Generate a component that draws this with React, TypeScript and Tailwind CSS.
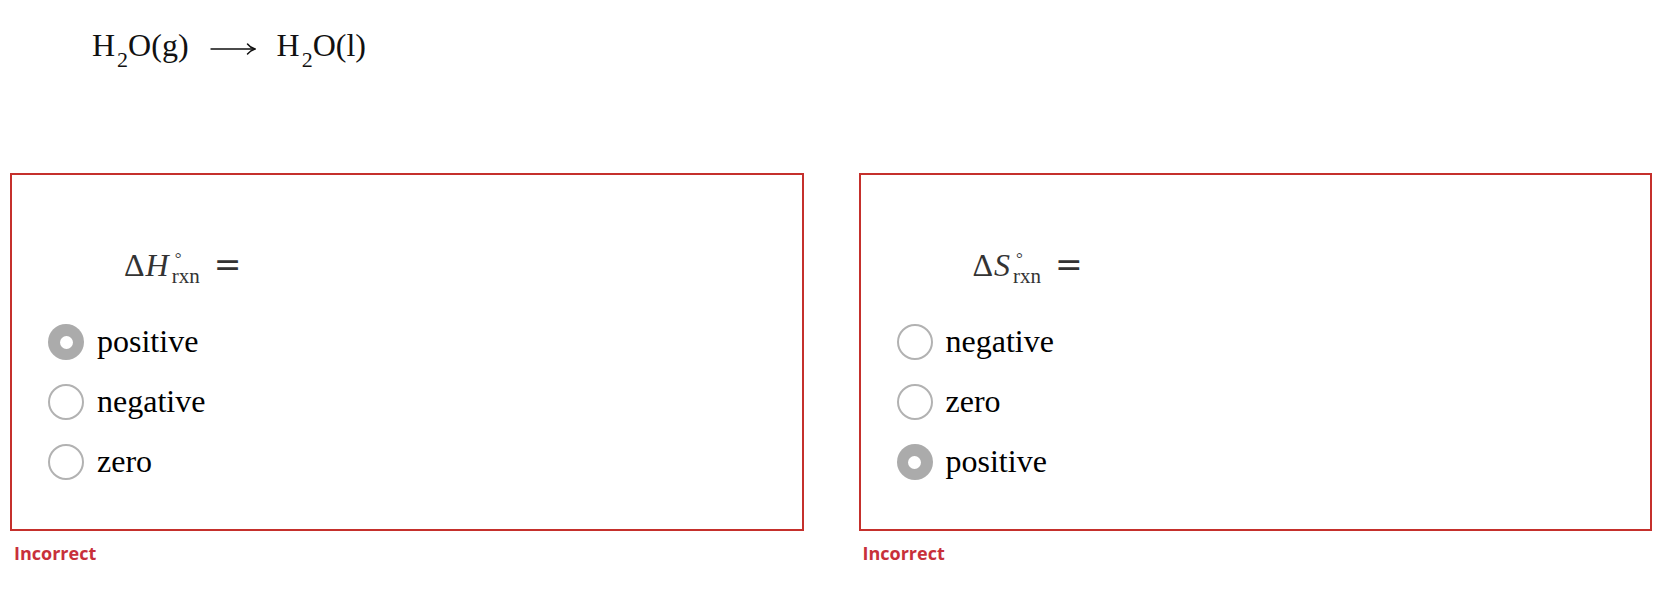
import React from "react";

type Choice = { label: string; checked?: boolean };

type Question = {
  symbol: string;
  choices: Choice[];
};

const questions: Question[] = [
  {
    symbol: "H",
    choices: [
      { label: "positive", checked: true },
      { label: "negative" },
      { label: "zero" },
    ],
  },
  {
    symbol: "S",
    choices: [
      { label: "negative" },
      { label: "zero" },
      { label: "positive", checked: true },
    ],
  },
];

const serif = "font-['Liberation_Serif','Times_New_Roman',serif]";

const Radio = ({ checked }: { checked?: boolean }) =>
  checked ? (
    <span className="flex h-[36px] w-[36px] shrink-0 items-center justify-center rounded-full bg-[#ababab]">
      <span className="h-[13px] w-[13px] rounded-full bg-white" />
    </span>
  ) : (
    <span className="h-[36px] w-[36px] shrink-0 rounded-full border-2 border-[#b2b2b2] bg-white" />
  );

// H₂O with a lowered "2"
const Water = ({ phase }: { phase: string }) => (
  <span>
    H<span className="relative top-[11px] ml-[2px] text-[22px] leading-none">2</span>O({phase})
  </span>
);

const Arrow = () => (
  <svg
    width="46"
    height="14"
    viewBox="0 0 46 14"
    className="mx-[21px] inline-block align-middle"
    fill="none"
    stroke="#111"
    strokeWidth="1.4"
    strokeLinecap="round"
  >
    <path d="M1 7 H44" />
    <path d="M37.5 2 Q40 5.5 45 7 Q40 8.5 37.5 12" />
  </svg>
);

const Heading = ({ symbol }: { symbol: string }) => (
  <div className={`flex h-[40px] items-center pl-[112px] text-[32px] leading-[40px] text-[#333] ${serif}`}>
    <span>Δ</span>
    <span className="ml-[1px] italic">{symbol}</span>
    <span className="relative ml-[3px]">
      <span className="absolute top-[10px] left-[3px] text-[17px] leading-[8px]">°</span>
      <span className="relative top-[7px] text-[21px] leading-none">rxn</span>
    </span>
    <span className="ml-[14px] font-['DejaVu_Serif',serif] text-[33px]">=</span>
  </div>
);

const QuestionBox = ({ q }: { q: Question }) => (
  <div>
    <div className="flex flex-col border-2 border-[#c5302c] pt-[70px] pb-[37px]">
      <Heading symbol={q.symbol} />
      <div className="mt-[27px] flex flex-col">
        {q.choices.map((c) => (
          <label key={c.label} className="flex h-[60px] items-center pl-[36px]">
            <Radio checked={c.checked} />
            <span className={`ml-[13px] pb-[3px] text-[32px] leading-[36px] text-black ${serif}`}>
              {c.label}
            </span>
          </label>
        ))}
      </div>
    </div>
    <p className="mt-[10px] pl-[4px] font-['Open_Sans',sans-serif] text-[18px] font-bold leading-[24px] text-[#c8303a]">
      Incorrect
    </p>
  </div>
);

export default function App() {
  return (
    <div className="min-h-[595px] w-[1660px] bg-white">
      <div className={`pt-[27px] pl-[92px] text-[32px] leading-[36px] text-[#111] ${serif}`}>
        <Water phase="g" />
        <Arrow />
        <Water phase="l" />
      </div>
      <div className="mt-[110px] grid grid-cols-2 gap-[55px] pr-[8px] pl-[10px]">
        {questions.map((q) => (
          <QuestionBox key={q.symbol} q={q} />
        ))}
      </div>
    </div>
  );
}
